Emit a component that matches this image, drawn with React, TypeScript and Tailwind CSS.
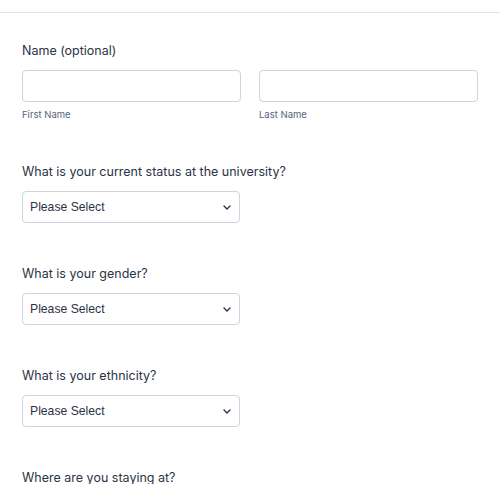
import React from "react";

const labelCls = "block text-[12.5px] leading-[20px] text-[#2c3345] font-['Inter',sans-serif] font-normal";

function Chevron() {
  return (
    <svg width="8" height="5" viewBox="0 0 8 5" fill="none" className="shrink-0">
      <path d="M1 1L4 4L7 1" stroke="#2c3345" strokeWidth="1.4" strokeLinecap="round" strokeLinejoin="round" />
    </svg>
  );
}

function SelectBox() {
  return (
    <div className="flex h-[32px] w-[218px] items-center justify-between rounded-[4px] border border-[#cdd2dc] bg-white pl-[7px] pr-[8px]">
      <span className="text-[12.2px] text-[#2c3345] font-['Liberation_Sans',Arial,sans-serif]">Please Select</span>
      <Chevron />
    </div>
  );
}

function Question({ label }: { label: string }) {
  return (
    <div className="mt-[41px]">
      <label className={labelCls + " mb-[9px]"}>{label}</label>
      <SelectBox />
    </div>
  );
}

export default function App() {
  return (
    <div className="h-[484px] w-[500px] overflow-hidden bg-white">
      <div className="h-[13px] border-b border-[#e3e5ea]" />
      <div className="px-[22px] pt-[28px]">
        <div>
          <label className={labelCls + " mb-[9px]"}>Name (optional)</label>
          <div className="grid grid-cols-2 gap-[18px]">
            <div>
              <div className="h-[32px] rounded-[4px] border border-[#cdd2dc] bg-white" />
              <div className="mt-[7px] text-[9.5px] leading-[12px] text-[#57647e] font-['Inter',sans-serif]">First Name</div>
            </div>
            <div>
              <div className="h-[32px] rounded-[4px] border border-[#cdd2dc] bg-white" />
              <div className="mt-[7px] text-[9.5px] leading-[12px] text-[#57647e] font-['Inter',sans-serif]">Last Name</div>
            </div>
          </div>
        </div>
        <div className="mt-[4px]">
          <Question label="What is your current status at the university?" />
          <Question label="What is your gender?" />
          <Question label="What is your ethnicity?" />
          <div className="mt-[41px]">
            <label className={labelCls}>Where are you staying at?</label>
          </div>
        </div>
      </div>
    </div>
  );
}
